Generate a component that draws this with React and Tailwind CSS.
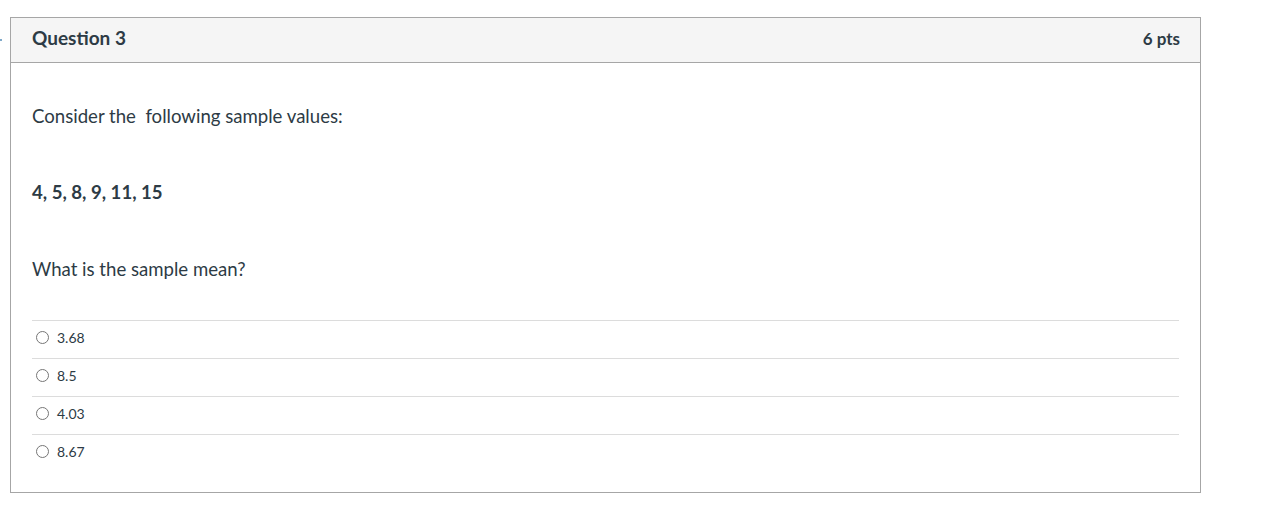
const answers = ["3.68", "8.5", "4.03", "8.67"];

function Radio() {
  return (
    <span className="inline-block h-[13px] w-[13px] rounded-full border border-[#767676] bg-white" />
  );
}

export default function App() {
  return (
    <div className="min-h-screen bg-white font-['Lato','Liberation_Sans',sans-serif] text-[#2d3b45]">
      <div className="relative pl-[10px] pt-[17px]">
        <span className="absolute left-0 top-[39px] h-[2px] w-[2px] bg-[#7fa9c9]" />
        <div className="w-[1191px] border border-[#a6a6a6]">
          <div className="flex h-[45px] items-center justify-between border-b border-[#a6a6a6] bg-[#f5f5f5] pb-[3px] pl-[21px] pr-[20px]">
            <h2 className="text-[19px] font-bold">Question 3</h2>
            <span className="text-[17px] font-bold">6 pts</span>
          </div>
          <div className="px-[21px] pb-[20px] pt-[40px] text-[18.6px]">
            <p className="leading-[26px]">Consider the&nbsp; following sample values:</p>
            <p className="mt-[50px] font-bold leading-[26px]">4, 5, 8, 9, 11, 15</p>
            <p className="mt-[51px] leading-[26px]">What is the sample mean?</p>
            <div className="mt-[38px]">
              {answers.map((a) => (
                <div
                  key={a}
                  className="flex h-[38px] items-center gap-[8px] border-t border-[#dcdcdc] pb-[4px] pl-[4px] text-[14px]"
                >
                  <Radio />
                  <span>{a}</span>
                </div>
              ))}
            </div>
          </div>
        </div>
      </div>
    </div>
  );
}
